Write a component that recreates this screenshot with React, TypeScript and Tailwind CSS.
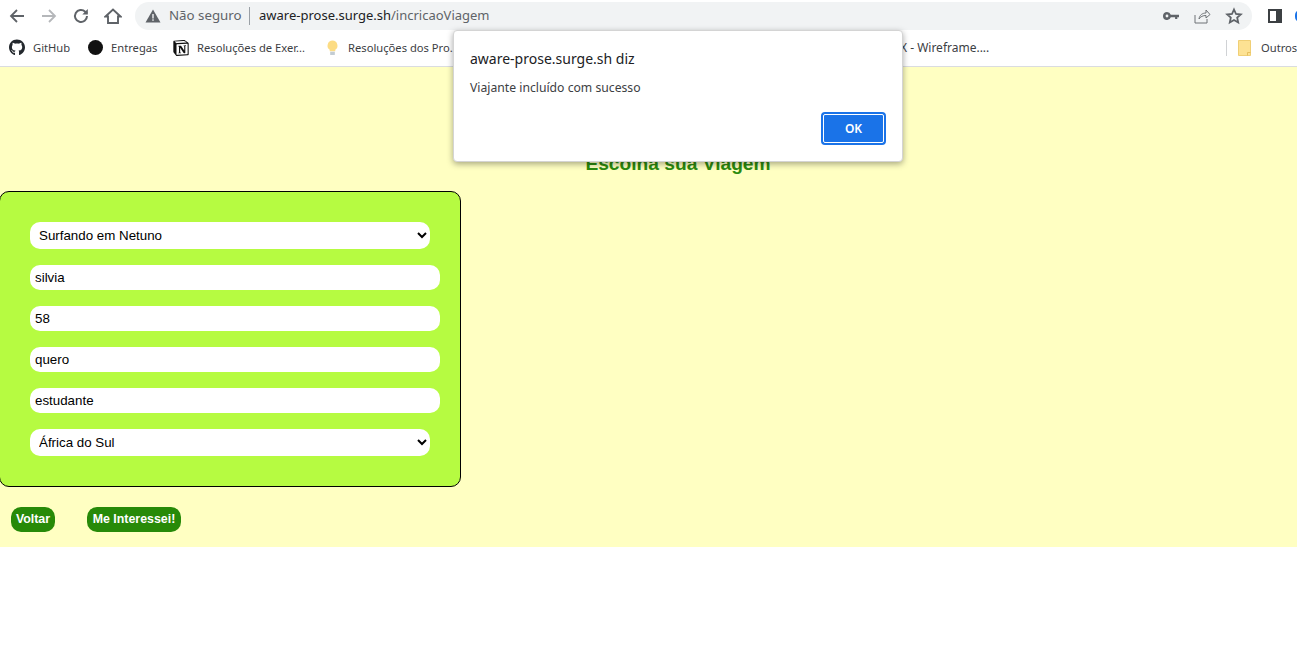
import React from 'react';
import { FaGithub } from 'react-icons/fa';
import { SiNotion } from 'react-icons/si';

const chromeFont = "font-['Noto_Sans',sans-serif]";

function Bookmark({ icon, label, width }: { icon: React.ReactNode; label: string; width: string }) {
  return (
    <div className={`flex items-center shrink-0 ${width}`}>
      <span className="w-[16px] h-[16px] flex items-center justify-center shrink-0">{icon}</span>
      <span className="ml-[8px] text-[11.2px] text-[#3c4043] whitespace-nowrap">{label}</span>
    </div>
  );
}

function BrowserBar() {
  return (
    <div className={`${chromeFont} bg-white`}>
      <div className="h-[32px] flex items-center pl-[8px]">
        <div className="flex items-center gap-[14px] w-[127px] shrink-0">
          <svg width="18" height="18" viewBox="0 0 18 18" fill="none" stroke="#5f6368" strokeWidth="1.8">
            <path d="M16 9H3M9 3 3 9l6 6" />
          </svg>
          <svg width="18" height="18" viewBox="0 0 18 18" fill="none" stroke="#b5b7ba" strokeWidth="1.8">
            <path d="M2 9h13M9 3l6 6-6 6" />
          </svg>
          <svg width="18" height="18" viewBox="0 0 18 18" fill="none" stroke="#5f6368" strokeWidth="2">
            <path d="M15 9a6 6 0 1 1-1.800-4.300L15 6.500" />
            <path d="M15.800 2v5.500h-5.500" fill="#5f6368" stroke="none" />
          </svg>
          <svg width="18" height="18" viewBox="0 0 18 18" fill="none" stroke="#5f6368" strokeWidth="1.900">
            <path d="M1.500 9.500 9 2.500l7.500 7H14v6.500H4V9.500z" />
          </svg>
        </div>
        <div className="w-[1117px] h-[28px] rounded-full bg-[#f1f3f4] flex items-center shrink-0">
          <svg className="ml-[10px]" width="16" height="16" viewBox="0 0 16 16" fill="#5f6368">
            <path d="M8 1.500 15.500 14.500H.5z" />
            <rect x="7.300" y="6" width="1.400" height="4.500" fill="#f1f3f4" />
            <rect x="7.300" y="11.300" width="1.400" height="1.500" fill="#f1f3f4" />
          </svg>
          <span className="ml-[8px] text-[13.3px] text-[#5f6368] w-[72px] whitespace-nowrap">Não seguro</span>
          <span className="ml-[8px] w-px h-[18px] bg-[#9aa0a6]" />
          <span className="ml-[9px] text-[13px] text-[#5f6368] whitespace-nowrap">
            <span className="text-[#202124]">aware-prose.surge.sh</span>/incricaoViagem
          </span>
          <div className="ml-auto flex items-center gap-[14px] pr-[9px]">
            <svg width="16" height="16" viewBox="0 0 16 16" fill="#5f6368">
              <path d="M4 4a4 4 0 0 1 3.800 2.700H16v2.600h-1.700V11h-2.200V9.300H7.800A4 4 0 1 1 4 4zm0 2.600a1.400 1.400 0 1 0 0 2.800 1.400 1.400 0 0 0 0-2.800z" />
            </svg>
            <svg width="18" height="18" viewBox="0 0 18 18" fill="none" stroke="#6f7377" strokeWidth="1">
              <path d="M2 8v8h12v-4M6 12c.5-4 3.500-6 7-6V3l4 4.500L13 11V8.500c-3 0-5.500 1-7 3.500z" />
            </svg>
            <svg width="18" height="18" viewBox="0 0 18 18" fill="none" stroke="#5f6368" strokeWidth="1.800">
              <path d="m9 2.500 2 4.500 4.800.5-3.600 3.200 1 4.800L9 13l-4.200 2.500 1-4.800L2.200 7.500 7 7z" />
            </svg>
          </div>
        </div>
        <svg className="ml-[15px] shrink-0" width="16" height="16" viewBox="0 0 16 16" fill="none" stroke="#3c4043" strokeWidth="2">
          <rect x="2" y="2" width="12" height="12" />
          <rect x="9" y="2" width="5" height="12" fill="#3c4043" stroke="none" />
        </svg>
        <span className="ml-[12px] w-[5px] h-[12px] rounded-l-full bg-[#1a73e8] shrink-0" />
      </div>
      <div className="h-[35px] flex items-center pb-[2px] pl-[9px] border-b border-[#dadce0] overflow-hidden">
        <Bookmark width="w-[78px]" label="GitHub" icon={<FaGithub size={17} color="#24292e" />} />
        <Bookmark width="w-[86px]" label="Entregas" icon={<span className="block w-[15px] h-[15px] rounded-full bg-[#111]" />} />
        <Bookmark width="w-[151px]" label="Resoluções de Exer..." icon={<SiNotion size={16} color="#111" />} />
        <Bookmark
          width="w-[576px]"
          label="Resoluções dos Pro..."
          icon={
            <svg width="13" height="16" viewBox="0 0 14 16">
              <path d="M7 0a5.500 5.500 0 0 1 3 10v1.500H4V10a5.500 5.500 0 0 1 3-10z" fill="#fcdc84" />
              <rect x="4.500" y="12" width="5" height="3.500" fill="#c3ccd3" />
            </svg>
          }
        />
        <span className="text-[12px] text-[#3c4043] whitespace-nowrap w-[326px] shrink-0">X - Wireframe....</span>
        <span className="w-px h-[16px] bg-[#d0d2d5] shrink-0" />
        <div className="ml-[11px] flex items-center shrink-0">
          <svg width="13" height="16" viewBox="0 0 13 16">
            <path d="M.5 .5h12v15H.5z" fill="#fde293" stroke="#f0cf75" />
            <path d="M9.500 15.500v-3h3" fill="none" stroke="#e6bf5e" />
          </svg>
          <span className="ml-[10px] text-[11.2px] text-[#3c4043]">Outros</span>
        </div>
      </div>
    </div>
  );
}

function Field({ value }: { value: string }) {
  return (
    <input
      readOnly
      value={value}
      className="block w-[410px] h-[25px] rounded-[10px] bg-white px-[5px] text-[13.33px] text-black outline-none font-['Liberation_Sans',sans-serif]"
    />
  );
}

function Picker({ value }: { value: string }) {
  return (
    <select
      defaultValue={value}
      className="block w-[400px] h-[27px] rounded-[10px] bg-white pl-[5px] text-[13.33px] text-black outline-none font-['Liberation_Sans',sans-serif]"
    >
      <option>{value}</option>
    </select>
  );
}

function AlertDialog() {
  return (
    <div className={`${chromeFont} absolute left-[453px] top-[30px] w-[450px] h-[132px] bg-white rounded-[4px] border border-[#d4d4d4] shadow-[0_2px_6px_rgba(0,0,0,0.35)] pl-[16px] pr-[16px] pt-[18px]`}>
      <p className="text-[14px] leading-[20px] text-[#202124]">aware-prose.surge.sh diz</p>
      <p className="mt-[10px] text-[12.2px] leading-[18px] text-[#3c4043]">Viajante incluído com sucesso</p>
      <div className="flex justify-end mt-[15px]">
        <button className="w-[65px] h-[33px] rounded-[4px] bg-[#1a73e8] border-2 border-[#1a73e8] outline outline-1 -outline-offset-[3px] outline-white text-white text-[12px] font-semibold">
          OK
        </button>
      </div>
    </div>
  );
}

export default function App() {
  return (
    <div className="relative min-h-screen bg-white font-['Liberation_Sans',sans-serif]">
      <BrowserBar />
      <div className="bg-[#ffffc2] h-[480px] overflow-hidden">
        <h1 className="pt-[86px] pl-[59px] text-center text-[19.2px] leading-[21px] font-bold text-[#2c8a0e]">Escolha sua Viagem</h1>
        <div className="mt-[17px] -ml-px w-[462px] h-[296px] rounded-[10px] border border-black bg-[#b6fb41] pl-[30px] pt-[30px]">
          <Picker value="Surfando em Netuno" />
          <div className="mt-[16px] flex flex-col gap-[16px]">
            <Field value="silvia" />
            <Field value="58" />
            <Field value="quero" />
            <Field value="estudante" />
          </div>
          <div className="mt-[16px]">
            <Picker value="África do Sul" />
          </div>
        </div>
        <div className="mt-[20px] pl-[11px] flex gap-[32px]">
          <button className="h-[25px] w-[44px] rounded-[10px] bg-[#278a08] text-white text-[12.4px] font-bold whitespace-nowrap">Voltar</button>
          <button className="h-[25px] w-[94px] rounded-[10px] bg-[#278a08] text-white text-[12.4px] font-bold whitespace-nowrap">Me Interessei!</button>
        </div>
      </div>
      <AlertDialog />
    </div>
  );
}
